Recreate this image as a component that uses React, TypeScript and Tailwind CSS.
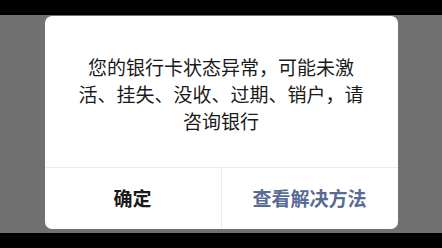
export default function App() {
  return (
    <div
      className="flex h-[248px] w-[442px] flex-col bg-black"
      style={{ fontFamily: '"Noto Sans CJK SC", "Noto Sans", sans-serif' }}
    >
      {/* top bar */}
      <div className="h-[15px] bg-black" />

      {/* dimmed backdrop */}
      <div className="flex h-[218px] justify-center bg-[#717171] pt-px">
        <div className="flex h-[213px] w-[353px] flex-col overflow-hidden rounded-[7px] bg-white">
          {/* message */}
          <div className="h-[151px] px-[30px] pt-[37px] text-center text-[19px] leading-[27px] text-[#1a1a1a]">
            您的银行卡状态异常，可能未激活、挂失、没收、过期、销户，请咨询银行
          </div>

          {/* actions */}
          <div className="flex flex-1 border-t border-[#ececec]">
            <button className="flex flex-1 items-center justify-center text-[19px] font-bold text-[#1a1a1a]">
              确定
            </button>
            <div className="w-px bg-[#ececec]" />
            <button className="flex flex-1 items-center justify-center text-[19px] font-bold text-[#576b95]">
              查看解决方法
            </button>
          </div>
        </div>
      </div>

      {/* bottom bar */}
      <div className="flex-1 bg-black" />
    </div>
  );
}
